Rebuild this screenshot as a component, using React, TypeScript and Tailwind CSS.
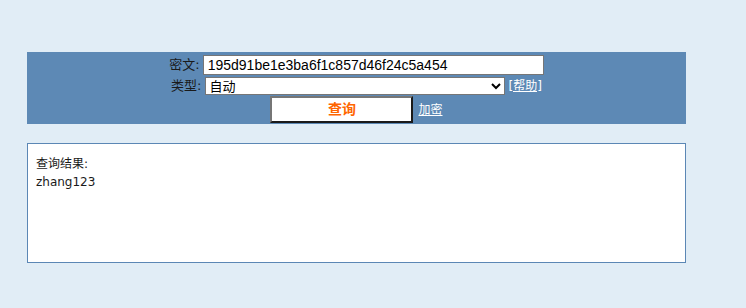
export default function App() {
  return (
    <div
      className="h-[308px] w-[746px] bg-[#e1edf6] pt-[52px] pl-[27px] text-[12px] text-[#1a1a1a]"
      style={{ fontFamily: '"DejaVu Sans", "Noto Sans CJK SC", sans-serif' }}
    >
      <div className="flex h-[72px] w-[659px] flex-col items-center bg-[#5d89b5] pt-[3px]">
        <div className="flex h-[20px] items-center">
          <span className="mr-[3px] text-[13px]">密文:</span>
          <input
            className="h-[20px] w-[341px] border border-[#767676] bg-white px-[4px] text-[14px] text-black outline-none"
            style={{ fontFamily: '"Liberation Sans", sans-serif' }}
            defaultValue="195d91be1e3ba6f1c857d46f24c5a454"
            readOnly
          />
        </div>
        <div className="mt-[2px] flex h-[18px] items-center">
          <span className="mr-[3px] text-[13px]">类型:</span>
          <select
            className="h-[18px] w-[300px] border border-[#767676] bg-white text-[13px] text-black"
            style={{ fontFamily: '"Liberation Sans", "Noto Sans CJK SC", sans-serif' }}
          >
            <option>自动</option>
          </select>
          <a className="ml-[4px] text-white underline" href="#">
            [帮助]
          </a>
        </div>
        <div className="mt-[1px] flex items-center">
          <button
            className="h-[27px] w-[143px] border-2 border-t-[#767676] border-l-[#767676] border-r-[#1a1a1a] border-b-[#1a1a1a] bg-white text-[14px] font-bold text-[#ff6600]"
            type="button"
          >
            查询
          </button>
          <a className="ml-[5px] text-white underline" href="#">
            加密
          </a>
        </div>
      </div>
      <div className="mt-[19px] h-[120px] w-[659px] border border-[#5b87b5] bg-white px-[8px] pt-[11px] leading-[18px]">
        <div>查询结果:</div>
        <div>zhang123</div>
      </div>
    </div>
  );
}
